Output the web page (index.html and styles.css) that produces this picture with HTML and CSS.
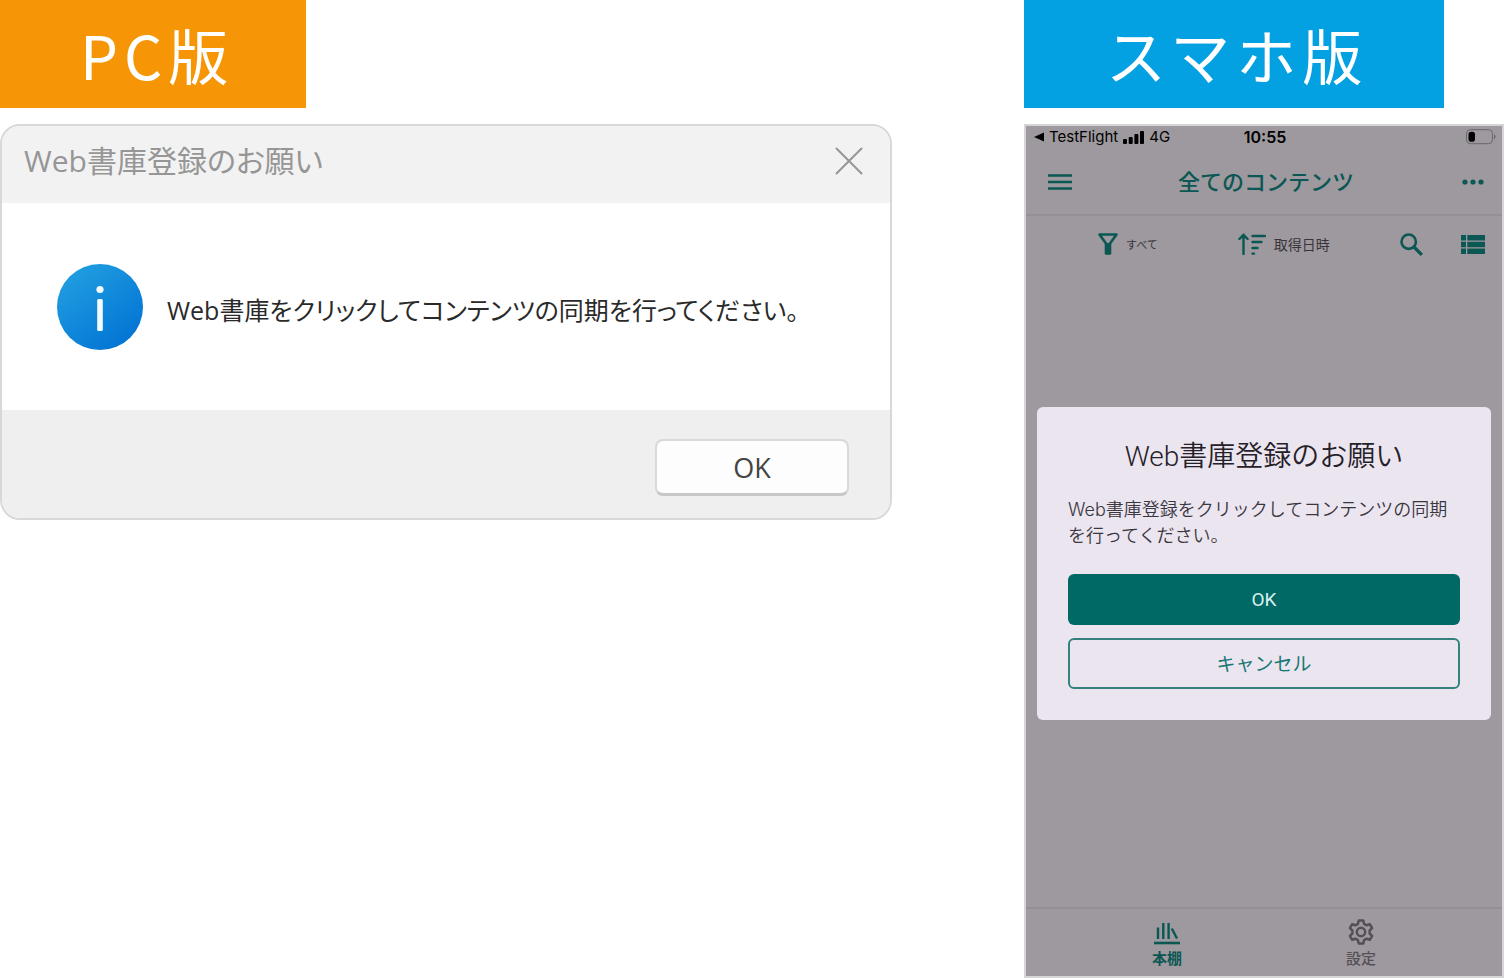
FILE: index.html
```html
<!DOCTYPE html>
<html lang="ja">
<head>
<meta charset="utf-8">
<meta name="viewport" content="width=device-width, initial-scale=1">
<title>Web書庫登録のお願い</title>
<link rel="stylesheet" href="styles.css">
</head>
<body>
<main class="compare">
  <section class="column">
    <h2 class="label label-pc">PC版</h2>
    <div class="window" role="dialog" aria-labelledby="pc-title">
      <header class="window-bar">
        <h3 class="window-title" id="pc-title">Web書庫登録のお願い</h3>
        <button class="window-close" type="button" aria-label="閉じる">
          <svg width="28" height="28" viewBox="0 0 28 28" fill="none" stroke="#969696" stroke-width="2" stroke-linecap="round"><path d="M1.500 1.500 26.500 26.500M26.500 1.500 1.500 26.500"/></svg>
        </button>
      </header>
      <div class="window-body">
        <svg class="info" width="86" height="86" viewBox="0 0 86 86" aria-hidden="true">
          <defs><linearGradient id="info-fill" x1="0.150" y1="0.100" x2="0.800" y2="0.950"><stop offset="0" stop-color="#209de0"/><stop offset="1" stop-color="#0274d4"/></linearGradient></defs>
          <circle cx="43" cy="43" r="43" fill="url(#info-fill)"/>
          <circle cx="43" cy="25.500" r="3.600" fill="#f4fbff"/>
          <rect x="40.200" y="35" width="5.600" height="32" rx="1.500" fill="#f4fbff"/>
        </svg>
        <p class="window-text">Web書庫をクリックしてコンテンツの同期を行ってください。</p>
      </div>
      <footer class="window-foot">
        <button class="window-ok" type="button">OK</button>
      </footer>
    </div>
  </section>

  <section class="column">
    <h2 class="label label-phone">スマホ版</h2>
    <div class="phone">
      <div class="status">
        <div class="status-left">
          <svg width="10" height="10" viewBox="0 0 10 10"><path d="M0 5 10 .5v9z"/></svg>
          <span>TestFlight</span>
          <svg width="21" height="13" viewBox="0 0 21 13"><rect y="8" width="4" height="5" rx="1"/><rect x="5.700" y="6" width="4" height="7" rx="1"/><rect x="11.400" y="3" width="4" height="10" rx="1"/><rect x="17" width="4" height="13" rx="1"/></svg>
          <span>4G</span>
        </div>
        <time class="status-time">10:55</time>
        <svg class="battery" width="31" height="16" viewBox="0 0 31 16"><rect x="1.500" y=".7" width="26" height="14" rx="4" fill="none" stroke="#6a666b"/><rect x="3.500" y="2.700" width="6.500" height="10" rx="2.800"/><path d="M29 5.500c2 .5 2 4 0 4.500z" fill="#6a666b"/></svg>
      </div>
      <header class="appbar">
        <button class="icon-button" type="button" aria-label="メニュー"><svg width="24" height="16" viewBox="0 0 24 16" fill="none" stroke="currentColor" stroke-width="2.600"><path d="M0 1.500h24M0 8h24M0 14.500h24"/></svg></button>
        <h3 class="appbar-title">全てのコンテンツ</h3>
        <button class="icon-button icon-end" type="button" aria-label="その他"><svg width="22" height="6" viewBox="0 0 22 6" fill="currentColor"><circle cx="3" cy="3" r="2.600"/><circle cx="11" cy="3" r="2.600"/><circle cx="19" cy="3" r="2.600"/></svg></button>
      </header>
      <div class="content">
        <div class="toolbar">
          <button class="tool tool-filter" type="button"><svg width="20" height="22" viewBox="0 0 20 22"><path d="M1.500 1.500h17L12 10.500v10H8v-10z" fill="none" stroke="currentColor" stroke-width="2.600" stroke-linejoin="round"/><path d="M7.500 10h5v10.500h-5z" fill="currentColor"/></svg><span>すべて</span></button>
          <button class="tool tool-sort" type="button"><svg width="28" height="22" viewBox="0 0 28 22" fill="none" stroke="currentColor" stroke-width="2.400" stroke-linecap="round" stroke-linejoin="round"><path d="M5.500 21V1.800M1.400 6 5.500 1.800 9.600 6M14.500 3h12.500M14.500 9h9M14.500 15h5M14.500 20.600h1.500"/></svg><span>取得日時</span></button>
          <button class="tool tool-search" type="button" aria-label="検索"><svg width="23" height="23" viewBox="0 0 23 23" fill="none" stroke="currentColor"><circle cx="8.700" cy="8.700" r="7.200" stroke-width="2.600"/><path d="m14 14 7.800 7.800" stroke-width="3.200"/></svg></button>
          <button class="tool tool-list" type="button" aria-label="リスト表示"><svg width="24" height="19" viewBox="0 0 24 19" fill="currentColor"><path d="M0 0h5v5.500H0zM6.300 0H24v5.500H6.300zM0 6.800h5v5.400H0zM6.300 6.800H24v5.400H6.300zM0 13.500h5V19H0zM6.300 13.500H24V19H6.300z"/></svg></button>
        </div>
        <div class="overlay">
          <div class="modal" role="dialog" aria-labelledby="phone-title">
            <h3 class="modal-title" id="phone-title">Web書庫登録のお願い</h3>
            <p class="modal-text">Web書庫登録をクリックしてコンテンツの同期を行ってください。</p>
            <button class="modal-button modal-ok" type="button">OK</button>
            <button class="modal-button modal-cancel" type="button">キャンセル</button>
          </div>
        </div>
      </div>
      <nav class="tabs">
        <a class="tab tab-active" href="#shelf">
          <svg width="26" height="24" viewBox="0 0 26 24" fill="none" stroke="currentColor"><path d="M4 6.500V18M9.300 2v16M14.600 2v16M17.800 7.500 23 17.500" stroke-width="2.400"/><path d="M0 22h26" stroke-width="2.600"/></svg>
          <span>本棚</span>
        </a>
        <a class="tab" href="#settings">
          <svg width="26" height="26" viewBox="0 0 26 26" fill="none" stroke="currentColor" stroke-width="2.500" stroke-linejoin="round"><path d="M10.700 1.500h4.600l.7 3.300 2.600 1.500 3.200-1.100 2.300 4-2.500 2.300v3l2.500 2.300-2.300 4-3.200-1.100-2.600 1.500-.7 3.300h-4.600l-.7-3.300-2.600-1.500-3.200 1.100-2.300-4 2.500-2.300v-3L1.900 9.200l2.300-4 3.200 1.100L10 4.800z"/><circle cx="13" cy="13" r="4.200"/></svg>
          <span>設定</span>
        </a>
      </nav>
    </div>
  </section>
</main>
</body>
</html>
```
FILE: styles.css
```css
* {
  box-sizing: border-box;
}

body {
  margin: 0;
  background: #fff;
  font-family: "Noto Sans CJK JP", sans-serif;
}

h2, h3, p {
  margin: 0;
  font-weight: 400;
}

button {
  margin: 0;
  padding: 0;
  border: 0;
  background: none;
  color: inherit;
  font: inherit;
  cursor: pointer;
}

svg {
  display: block;
  flex: none;
}

.compare {
  display: grid;
  grid-template-columns: minmax(0, 892fr) minmax(0, 480fr);
  column-gap: 132px;
  min-height: 100vh;
}

.column {
  display: flex;
  flex-direction: column;
  align-items: flex-start;
  gap: 16px;
}

.label {
  color: #fff;
  font-size: 60px;
  line-height: 108px;
  letter-spacing: 6px;
}

.label-pc {
  padding: 0 72px 0 80px;
  background: #f69506;
}

.label-phone {
  padding: 0 76px 0 82px;
  background: #03a1e2;
}

/* Desktop dialog */
.window {
  width: 100%;
  overflow: hidden;
  border: 2px solid #d8d8d8;
  border-radius: 20px;
  background: #fff;
  font-family: "Open Sans", "Noto Sans CJK JP", sans-serif;
  font-feature-settings: "palt";
}

.window-bar {
  display: flex;
  align-items: center;
  justify-content: space-between;
  padding: 13px 27px 20px 22px;
  background: #f2f2f2;
}

.window-title {
  color: #969696;
  font-size: 30px;
  line-height: 44px;
}

.window-body {
  display: flex;
  align-items: center;
  gap: 24px;
  padding: 61px 24px 60px 55px;
}

.window-text {
  padding-top: 6px;
  color: #2a2a2a;
  font-size: 25px;
  line-height: 44px;
}

.window-foot {
  display: flex;
  justify-content: flex-end;
  padding: 29px 41px 22px;
  background: #efefef;
}

.window-ok {
  width: 194px;
  height: 57px;
  border: 2px solid #d9d9d9;
  border-bottom: 3px solid #c8c8c8;
  border-radius: 8px;
  background: #fdfdfd;
  color: #444;
  font-size: 27px;
}

/* Phone screen */
.phone {
  display: flex;
  flex: 1;
  flex-direction: column;
  width: 100%;
  border: 2px solid #d5d5d5;
  background: #9e999e;
  color: #0b5753;
}

.status {
  display: grid;
  grid-template-columns: 1fr auto 1fr;
  align-items: center;
  padding: 0 6px 0 8px;
  color: #000;
  font-family: Inter, sans-serif;
  font-size: 15px;
  line-height: 22px;
}

.status-left {
  display: flex;
  align-items: center;
  gap: 5px;
}

.status-time {
  font-size: 16px;
  font-weight: 600;
}

.battery {
  justify-self: end;
}

.appbar {
  display: grid;
  grid-template-columns: 1fr auto 1fr;
  align-items: center;
  height: 68px;
  padding: 2px 18px 0 22px;
  border-bottom: 2px solid #948f94;
}

.icon-button {
  justify-self: start;
}

.icon-end {
  justify-self: end;
}

.appbar-title {
  padding-bottom: 4px;
  font-size: 22px;
  font-weight: 500;
  line-height: 32px;
}

.content {
  position: relative;
  flex: 1;
}

.toolbar {
  display: flex;
  align-items: center;
  padding: 16px 17px 0 72px;
}

.tool {
  display: flex;
  align-items: center;
  gap: 8px;
  font-size: 14px;
  line-height: 24px;
}

.tool span {
  color: #38343a;
}

.tool-filter {
  font-size: 11px;
}

.tool-sort {
  margin-right: auto;
  margin-left: 80px;
}

.tool-list {
  margin-left: 38px;
}

.overlay {
  position: absolute;
  inset: 0;
  display: grid;
  align-items: center;
  padding: 4px 11px 0;
}

.modal {
  display: flex;
  flex-direction: column;
  padding: 29px 31px 31px;
  border-radius: 6px;
  background: #ebe5f0;
  color: #252128;
  font-family: Roboto, "Noto Sans CJK JP", sans-serif;
}

.modal-title {
  font-size: 28px;
  font-weight: 350;
  line-height: 42px;
  text-align: center;
}

.modal-text {
  margin: 19px 0 25px;
  color: #3a363e;
  font-family: Inter, "Noto Sans CJK JP", sans-serif;
  font-size: 18px;
  font-weight: 350;
  line-height: 26px;
}

.modal-button {
  height: 51px;
  border-radius: 6px;
  font-size: 19px;
}

.modal-ok {
  margin-bottom: 13px;
  background: #006965;
  color: #d9f0ee;
}

.modal-cancel {
  padding-bottom: 3px;
  border: 2px solid #35817f;
  color: #177773;
}

.tabs {
  display: flex;
  justify-content: center;
  padding: 10px 44px 7px;
  border-top: 2px solid #948f94;
}

.tab {
  display: flex;
  flex: 1;
  flex-direction: column;
  align-items: center;
  justify-content: flex-end;
  gap: 2px;
  color: #555055;
  font-size: 15px;
  font-weight: 500;
  line-height: 22px;
  text-decoration: none;
}

.tab-active {
  color: #0b5753;
  font-weight: 700;
}
```
